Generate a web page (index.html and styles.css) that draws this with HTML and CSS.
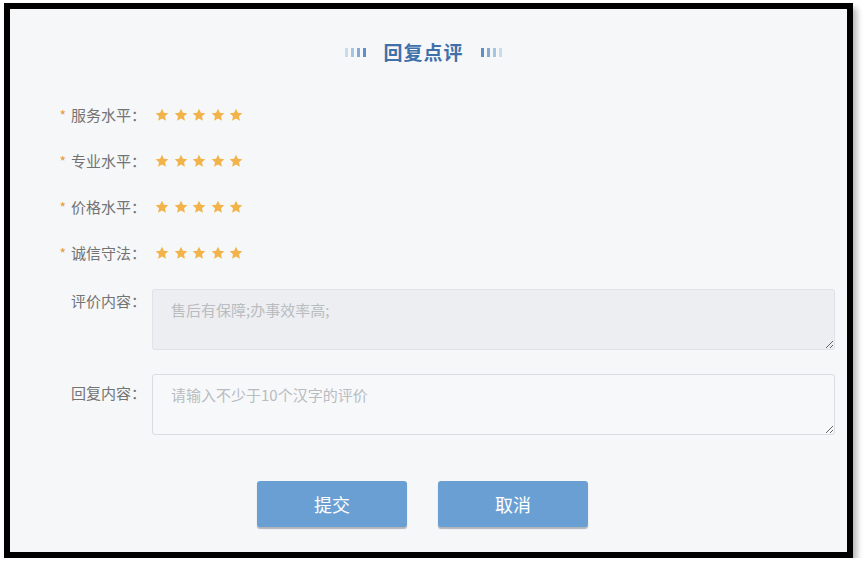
FILE: index.html
```html
<!DOCTYPE html>
<html lang="zh-CN">
<head>
<meta charset="utf-8">
<title>回复点评</title>
<link rel="stylesheet" href="styles.css">
</head>
<body>
<div class="frame">
  <div class="panel">
    <div class="title">
      <span class="bars bars-left"><i></i><i></i><i></i><i></i></span>
      <h1>回复点评</h1>
      <span class="bars bars-right"><i></i><i></i><i></i><i></i></span>
    </div>

    <div class="row rate">
      <label class="label"><span class="req">*</span>服务水平：</label>
      <div class="stars">
        <svg viewBox="0 0 14 14"><path d="M7 .8l1.9 4 4.4.5-3.3 3 .9 4.4L7 10.5l-3.9 2.2.9-4.4-3.3-3 4.4-.5z"/></svg>
        <svg viewBox="0 0 14 14"><path d="M7 .8l1.9 4 4.4.5-3.3 3 .9 4.4L7 10.5l-3.9 2.2.9-4.4-3.3-3 4.4-.5z"/></svg>
        <svg viewBox="0 0 14 14"><path d="M7 .8l1.9 4 4.4.5-3.3 3 .9 4.4L7 10.5l-3.9 2.2.9-4.4-3.3-3 4.4-.5z"/></svg>
        <svg viewBox="0 0 14 14"><path d="M7 .8l1.9 4 4.4.5-3.3 3 .9 4.4L7 10.5l-3.9 2.2.9-4.4-3.3-3 4.4-.5z"/></svg>
        <svg viewBox="0 0 14 14"><path d="M7 .8l1.9 4 4.4.5-3.3 3 .9 4.4L7 10.5l-3.9 2.2.9-4.4-3.3-3 4.4-.5z"/></svg>
      </div>
    </div>
    <div class="row rate">
      <label class="label"><span class="req">*</span>专业水平：</label>
      <div class="stars">
        <svg viewBox="0 0 14 14"><path d="M7 .8l1.9 4 4.4.5-3.3 3 .9 4.4L7 10.5l-3.9 2.2.9-4.4-3.3-3 4.4-.5z"/></svg>
        <svg viewBox="0 0 14 14"><path d="M7 .8l1.9 4 4.4.5-3.3 3 .9 4.4L7 10.5l-3.9 2.2.9-4.4-3.3-3 4.4-.5z"/></svg>
        <svg viewBox="0 0 14 14"><path d="M7 .8l1.9 4 4.4.5-3.3 3 .9 4.4L7 10.5l-3.9 2.2.9-4.4-3.3-3 4.4-.5z"/></svg>
        <svg viewBox="0 0 14 14"><path d="M7 .8l1.9 4 4.4.5-3.3 3 .9 4.4L7 10.5l-3.9 2.2.9-4.4-3.3-3 4.4-.5z"/></svg>
        <svg viewBox="0 0 14 14"><path d="M7 .8l1.9 4 4.4.5-3.3 3 .9 4.4L7 10.5l-3.9 2.2.9-4.4-3.3-3 4.4-.5z"/></svg>
      </div>
    </div>
    <div class="row rate">
      <label class="label"><span class="req">*</span>价格水平：</label>
      <div class="stars">
        <svg viewBox="0 0 14 14"><path d="M7 .8l1.9 4 4.4.5-3.3 3 .9 4.4L7 10.5l-3.9 2.2.9-4.4-3.3-3 4.4-.5z"/></svg>
        <svg viewBox="0 0 14 14"><path d="M7 .8l1.9 4 4.4.5-3.3 3 .9 4.4L7 10.5l-3.9 2.2.9-4.4-3.3-3 4.4-.5z"/></svg>
        <svg viewBox="0 0 14 14"><path d="M7 .8l1.9 4 4.4.5-3.3 3 .9 4.4L7 10.5l-3.9 2.2.9-4.4-3.3-3 4.4-.5z"/></svg>
        <svg viewBox="0 0 14 14"><path d="M7 .8l1.9 4 4.4.5-3.3 3 .9 4.4L7 10.5l-3.9 2.2.9-4.4-3.3-3 4.4-.5z"/></svg>
        <svg viewBox="0 0 14 14"><path d="M7 .8l1.9 4 4.4.5-3.3 3 .9 4.4L7 10.5l-3.9 2.2.9-4.4-3.3-3 4.4-.5z"/></svg>
      </div>
    </div>
    <div class="row rate">
      <label class="label"><span class="req">*</span>诚信守法：</label>
      <div class="stars">
        <svg viewBox="0 0 14 14"><path d="M7 .8l1.9 4 4.4.5-3.3 3 .9 4.4L7 10.5l-3.9 2.2.9-4.4-3.3-3 4.4-.5z"/></svg>
        <svg viewBox="0 0 14 14"><path d="M7 .8l1.9 4 4.4.5-3.3 3 .9 4.4L7 10.5l-3.9 2.2.9-4.4-3.3-3 4.4-.5z"/></svg>
        <svg viewBox="0 0 14 14"><path d="M7 .8l1.9 4 4.4.5-3.3 3 .9 4.4L7 10.5l-3.9 2.2.9-4.4-3.3-3 4.4-.5z"/></svg>
        <svg viewBox="0 0 14 14"><path d="M7 .8l1.9 4 4.4.5-3.3 3 .9 4.4L7 10.5l-3.9 2.2.9-4.4-3.3-3 4.4-.5z"/></svg>
        <svg viewBox="0 0 14 14"><path d="M7 .8l1.9 4 4.4.5-3.3 3 .9 4.4L7 10.5l-3.9 2.2.9-4.4-3.3-3 4.4-.5z"/></svg>
      </div>
    </div>

    <div class="row text-row first">
      <label class="label label-top1">评价内容：</label>
      <textarea class="box box-disabled" disabled placeholder="售后有保障;办事效率高;"></textarea>
    </div>
    <div class="row text-row second">
      <label class="label label-top2">回复内容：</label>
      <textarea class="box" placeholder="请输入不少于10个汉字的评价"></textarea>
    </div>

    <div class="actions">
      <button class="btn" type="button">提交</button>
      <button class="btn" type="button">取消</button>
    </div>
  </div>
</div>
</body>
</html>
```

FILE: styles.css
```css
html, body {
  margin: 0;
  padding: 0;
  background: #ffffff;
}

body {
  font-family: "Noto Sans CJK SC", "Liberation Sans", sans-serif;
}

.frame {
  margin: 3px 0 0 4px;
  width: 849px;
  height: 555px;
  box-sizing: border-box;
  border: 6px solid #000;
  box-shadow: 4px 5px 6px rgba(0, 0, 0, 0.28);
  background: #f6f7f9;
}

.panel {
  padding-top: 31px;
}

.title {
  display: flex;
  justify-content: center;
  align-items: center;
  height: 24px;
  padding-right: 10px;
}

.title h1 {
  margin: 0 17px;
  font-size: 19px;
  font-weight: 700;
  line-height: 24px;
  color: #3f70a9;
  letter-spacing: 1px;
}

.bars {
  display: flex;
  gap: 3px;
}

.bars i {
  display: block;
  width: 3px;
  height: 9px;
}

.bars-left i:nth-child(1), .bars-right i:nth-child(4) { background: #c8dcee; }
.bars-left i:nth-child(2), .bars-right i:nth-child(3) { background: #a6c5e4; }
.bars-left i:nth-child(3), .bars-right i:nth-child(2) { background: #83acd7; }
.bars-left i:nth-child(4), .bars-right i:nth-child(1) { background: #5e8fc6; }

.row {
  display: flex;
}

.rate {
  height: 46px;
  align-items: center;
}

.title + .rate {
  margin-top: 28px;
}

.label {
  width: 142px;
  flex: none;
  box-sizing: border-box;
  text-align: right;
  padding-right: 6px;
  font-size: 15px;
  line-height: 20px;
  color: #737373;
  white-space: nowrap;
}

.req {
  color: #e39b3c;
  font-size: 14px;
  margin-right: 5px;
}

.stars {
  display: flex;
  gap: 4.5px;
  padding-left: 3px;
}

.stars svg {
  width: 14px;
  height: 14px;
  fill: #f1b34a;
}

.text-row.first {
  margin-top: 13px;
}

.text-row.second {
  margin-top: 24px;
}

.label-top1 {
  padding-top: 2px;
}

.label-top2 {
  padding-top: 9px;
}

.box {
  width: 683px;
  height: 61px;
  box-sizing: border-box;
  margin: 0;
  padding: 9px 18px;
  border: 1px solid #d9dde2;
  border-radius: 3px;
  font-family: "Noto Sans CJK SC", "Liberation Sans", sans-serif;
  font-size: 15px;
  line-height: 22px;
  color: #555;
  background: #f7f8fa;
  resize: vertical;
  outline: none;
}

.box-disabled {
  background: #eceef1;
  border-color: #dfe2e6;
}

.box::placeholder {
  color: #b9bcc0;
}

.actions {
  display: flex;
  gap: 31px;
  padding-left: 247px;
  margin-top: 46px;
}

.btn {
  width: 150px;
  height: 46px;
  border: none;
  border-radius: 3px;
  background: #6a9fd3;
  box-shadow: 0 2px 1px rgba(90, 100, 110, 0.45);
  color: #fff;
  font-family: "Noto Sans CJK SC", "Liberation Sans", sans-serif;
  font-size: 18px;
  cursor: pointer;
}
```
